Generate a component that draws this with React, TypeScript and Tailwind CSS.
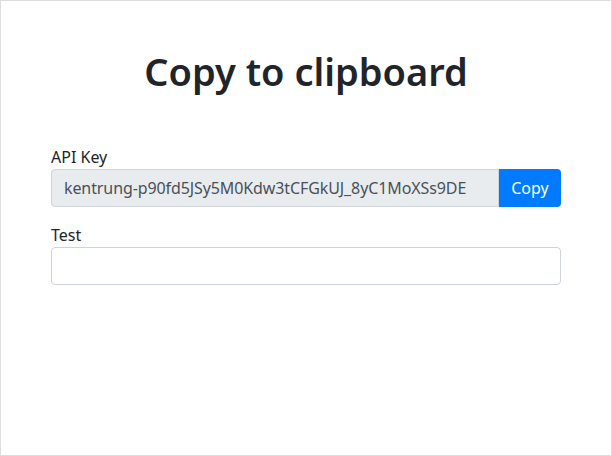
export default function App() {
  return (
    <div className="h-[456px] border border-[#dedede] bg-white font-['Noto_Sans',sans-serif] text-[#212529]">
      <div className="mx-auto w-[510px] pt-[46px]">
        <h1 className="text-center text-[38px] leading-[48px] font-semibold">Copy to clipboard</h1>

        <div className="mt-[50px]">
          <label className="block text-[16px] leading-[24px]">API Key</label>
          <div className="flex h-[38px]">
            <input
              readOnly
              value="kentrung-p90fd5JSy5M0Kdw3tCFGkUJ_8yC1MoXSs9DE"
              className="min-w-0 flex-1 rounded-l-[4px] border border-[#ced4da] bg-[#e9ecef] px-3 text-[16px] tracking-[-0.1px] text-[#495057] outline-none"
            />
            <button className="w-[62px] rounded-r-[4px] bg-[#007bff] text-[16px] text-white">Copy</button>
          </div>
        </div>

        <div className="mt-4">
          <label className="block text-[16px] leading-[24px]">Test</label>
          <input className="block h-[38px] w-full rounded-[4px] border border-[#ced4da] bg-white px-3 text-[16px] outline-none" />
        </div>
      </div>
    </div>
  );
}
